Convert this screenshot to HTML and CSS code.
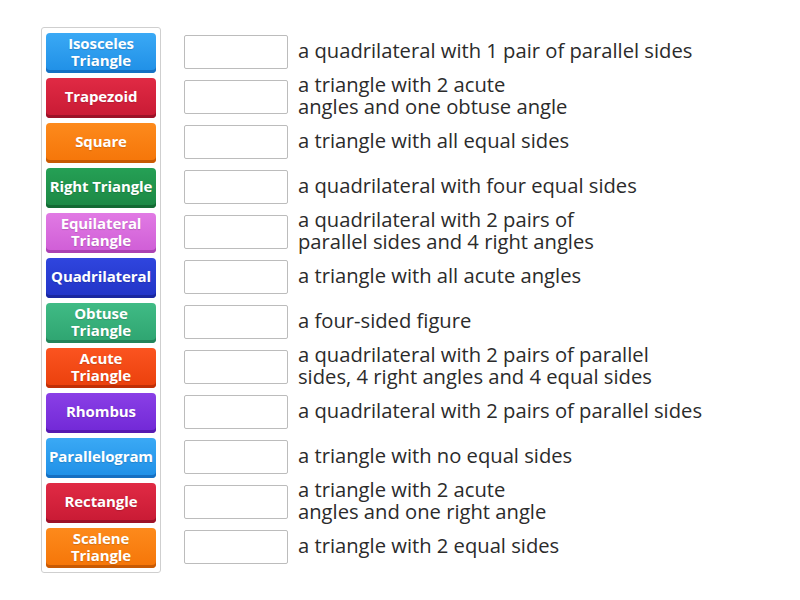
FILE: index.html
```html
<!DOCTYPE html>
<html>
<head>
<meta charset="utf-8">
<link rel="stylesheet" href="styles.css">
</head>
<body>
<div class="game">
  <div class="bank">
    <div class="tile blue">Isosceles<br>Triangle</div>
    <div class="tile red">Trapezoid</div>
    <div class="tile orange">Square</div>
    <div class="tile green">Right Triangle</div>
    <div class="tile pink">Equilateral<br>Triangle</div>
    <div class="tile navy">Quadrilateral</div>
    <div class="tile teal">Obtuse<br>Triangle</div>
    <div class="tile vermil">Acute<br>Triangle</div>
    <div class="tile purple">Rhombus</div>
    <div class="tile blue">Parallelogram</div>
    <div class="tile red">Rectangle</div>
    <div class="tile orange">Scalene<br>Triangle</div>
  </div>
  <div class="rows">
    <div class="row"><div class="slot"></div><div class="desc">a quadrilateral with 1 pair of parallel sides</div></div>
    <div class="row"><div class="slot"></div><div class="desc">a triangle with 2 acute<br>angles and one obtuse angle</div></div>
    <div class="row"><div class="slot"></div><div class="desc">a triangle with all equal sides</div></div>
    <div class="row"><div class="slot"></div><div class="desc">a quadrilateral with four equal sides</div></div>
    <div class="row"><div class="slot"></div><div class="desc">a quadrilateral with 2 pairs of<br>parallel sides and 4 right angles</div></div>
    <div class="row"><div class="slot"></div><div class="desc">a triangle with all acute angles</div></div>
    <div class="row"><div class="slot"></div><div class="desc">a four-sided figure</div></div>
    <div class="row"><div class="slot"></div><div class="desc">a quadrilateral with 2 pairs of parallel<br>sides, 4 right angles and 4 equal sides</div></div>
    <div class="row"><div class="slot"></div><div class="desc">a quadrilateral with 2 pairs of parallel sides</div></div>
    <div class="row"><div class="slot"></div><div class="desc">a triangle with no equal sides</div></div>
    <div class="row"><div class="slot"></div><div class="desc">a triangle with 2 acute<br>angles and one right angle</div></div>
    <div class="row"><div class="slot"></div><div class="desc">a triangle with 2 equal sides</div></div>
  </div>
</div>
</body>
</html>
```
FILE: styles.css
```css
html, body {
  margin: 0;
  padding: 0;
  background: #fff;
}
body {
  font-family: "Open Sans", "Liberation Sans", sans-serif;
}
.game {
  display: flex;
  align-items: flex-start;
  padding: 27px 0 0 41px;
}
.bank {
  width: 110px;
  padding: 5px 4px 4px 4px;
  border: 1px solid #cfcfcf;
  border-radius: 3px;
  display: flex;
  flex-direction: column;
  gap: 5px;
}
.tile {
  height: 40px;
  box-sizing: border-box;
  border-radius: 4px;
  color: #fff;
  font-weight: 700;
  font-size: 15px;
  line-height: 17px;
  text-align: center;
  display: flex;
  align-items: center;
  justify-content: center;
  padding: 0 0 3px;
  letter-spacing: -0.1px;
  white-space: nowrap;
  text-shadow: 0 1px 1px rgba(0,0,0,0.15);
}
.blue { background: linear-gradient(#3aa9f5, #1f8fe6); box-shadow: inset 0 -3px 0 #1670c2; }
.red { background: linear-gradient(#e02a44, #c81a34); box-shadow: inset 0 -3px 0 #9c1228; }
.orange { background: linear-gradient(#fd8a1c, #f57508); box-shadow: inset 0 -3px 0 #c85a04; }
.green { background: linear-gradient(#25a055, #1c8744); box-shadow: inset 0 -3px 0 #136a33; }
.pink { background: linear-gradient(#e17ae4, #cf5dd6); box-shadow: inset 0 -3px 0 #aa42b2; }
.navy { background: linear-gradient(#2f45de, #2234c6); box-shadow: inset 0 -3px 0 #1a27a0; }
.teal { background: linear-gradient(#40bb85, #2ea470); box-shadow: inset 0 -3px 0 #23835a; }
.vermil { background: linear-gradient(#fb5420, #ea400c); box-shadow: inset 0 -3px 0 #c02f06; }
.purple { background: linear-gradient(#8a3fe6, #7128d6); box-shadow: inset 0 -3px 0 #561ab0; }
.rows {
  margin-left: 23px;
  padding-top: 5px;
  display: flex;
  flex-direction: column;
}
.row {
  height: 45px;
  display: flex;
  align-items: center;
  padding-bottom: 5px;
  box-sizing: border-box;
}
.slot {
  width: 104px;
  height: 34px;
  box-sizing: border-box;
  border: 1px solid #bcbcbc;
  border-radius: 2px;
  background: #fff;
  flex: none;
}
.desc {
  margin-left: 10px;
  margin-bottom: 5px;
  font-size: 20.2px;
  line-height: 22px;
  color: #2b2b2b;
  white-space: nowrap;
}
```
